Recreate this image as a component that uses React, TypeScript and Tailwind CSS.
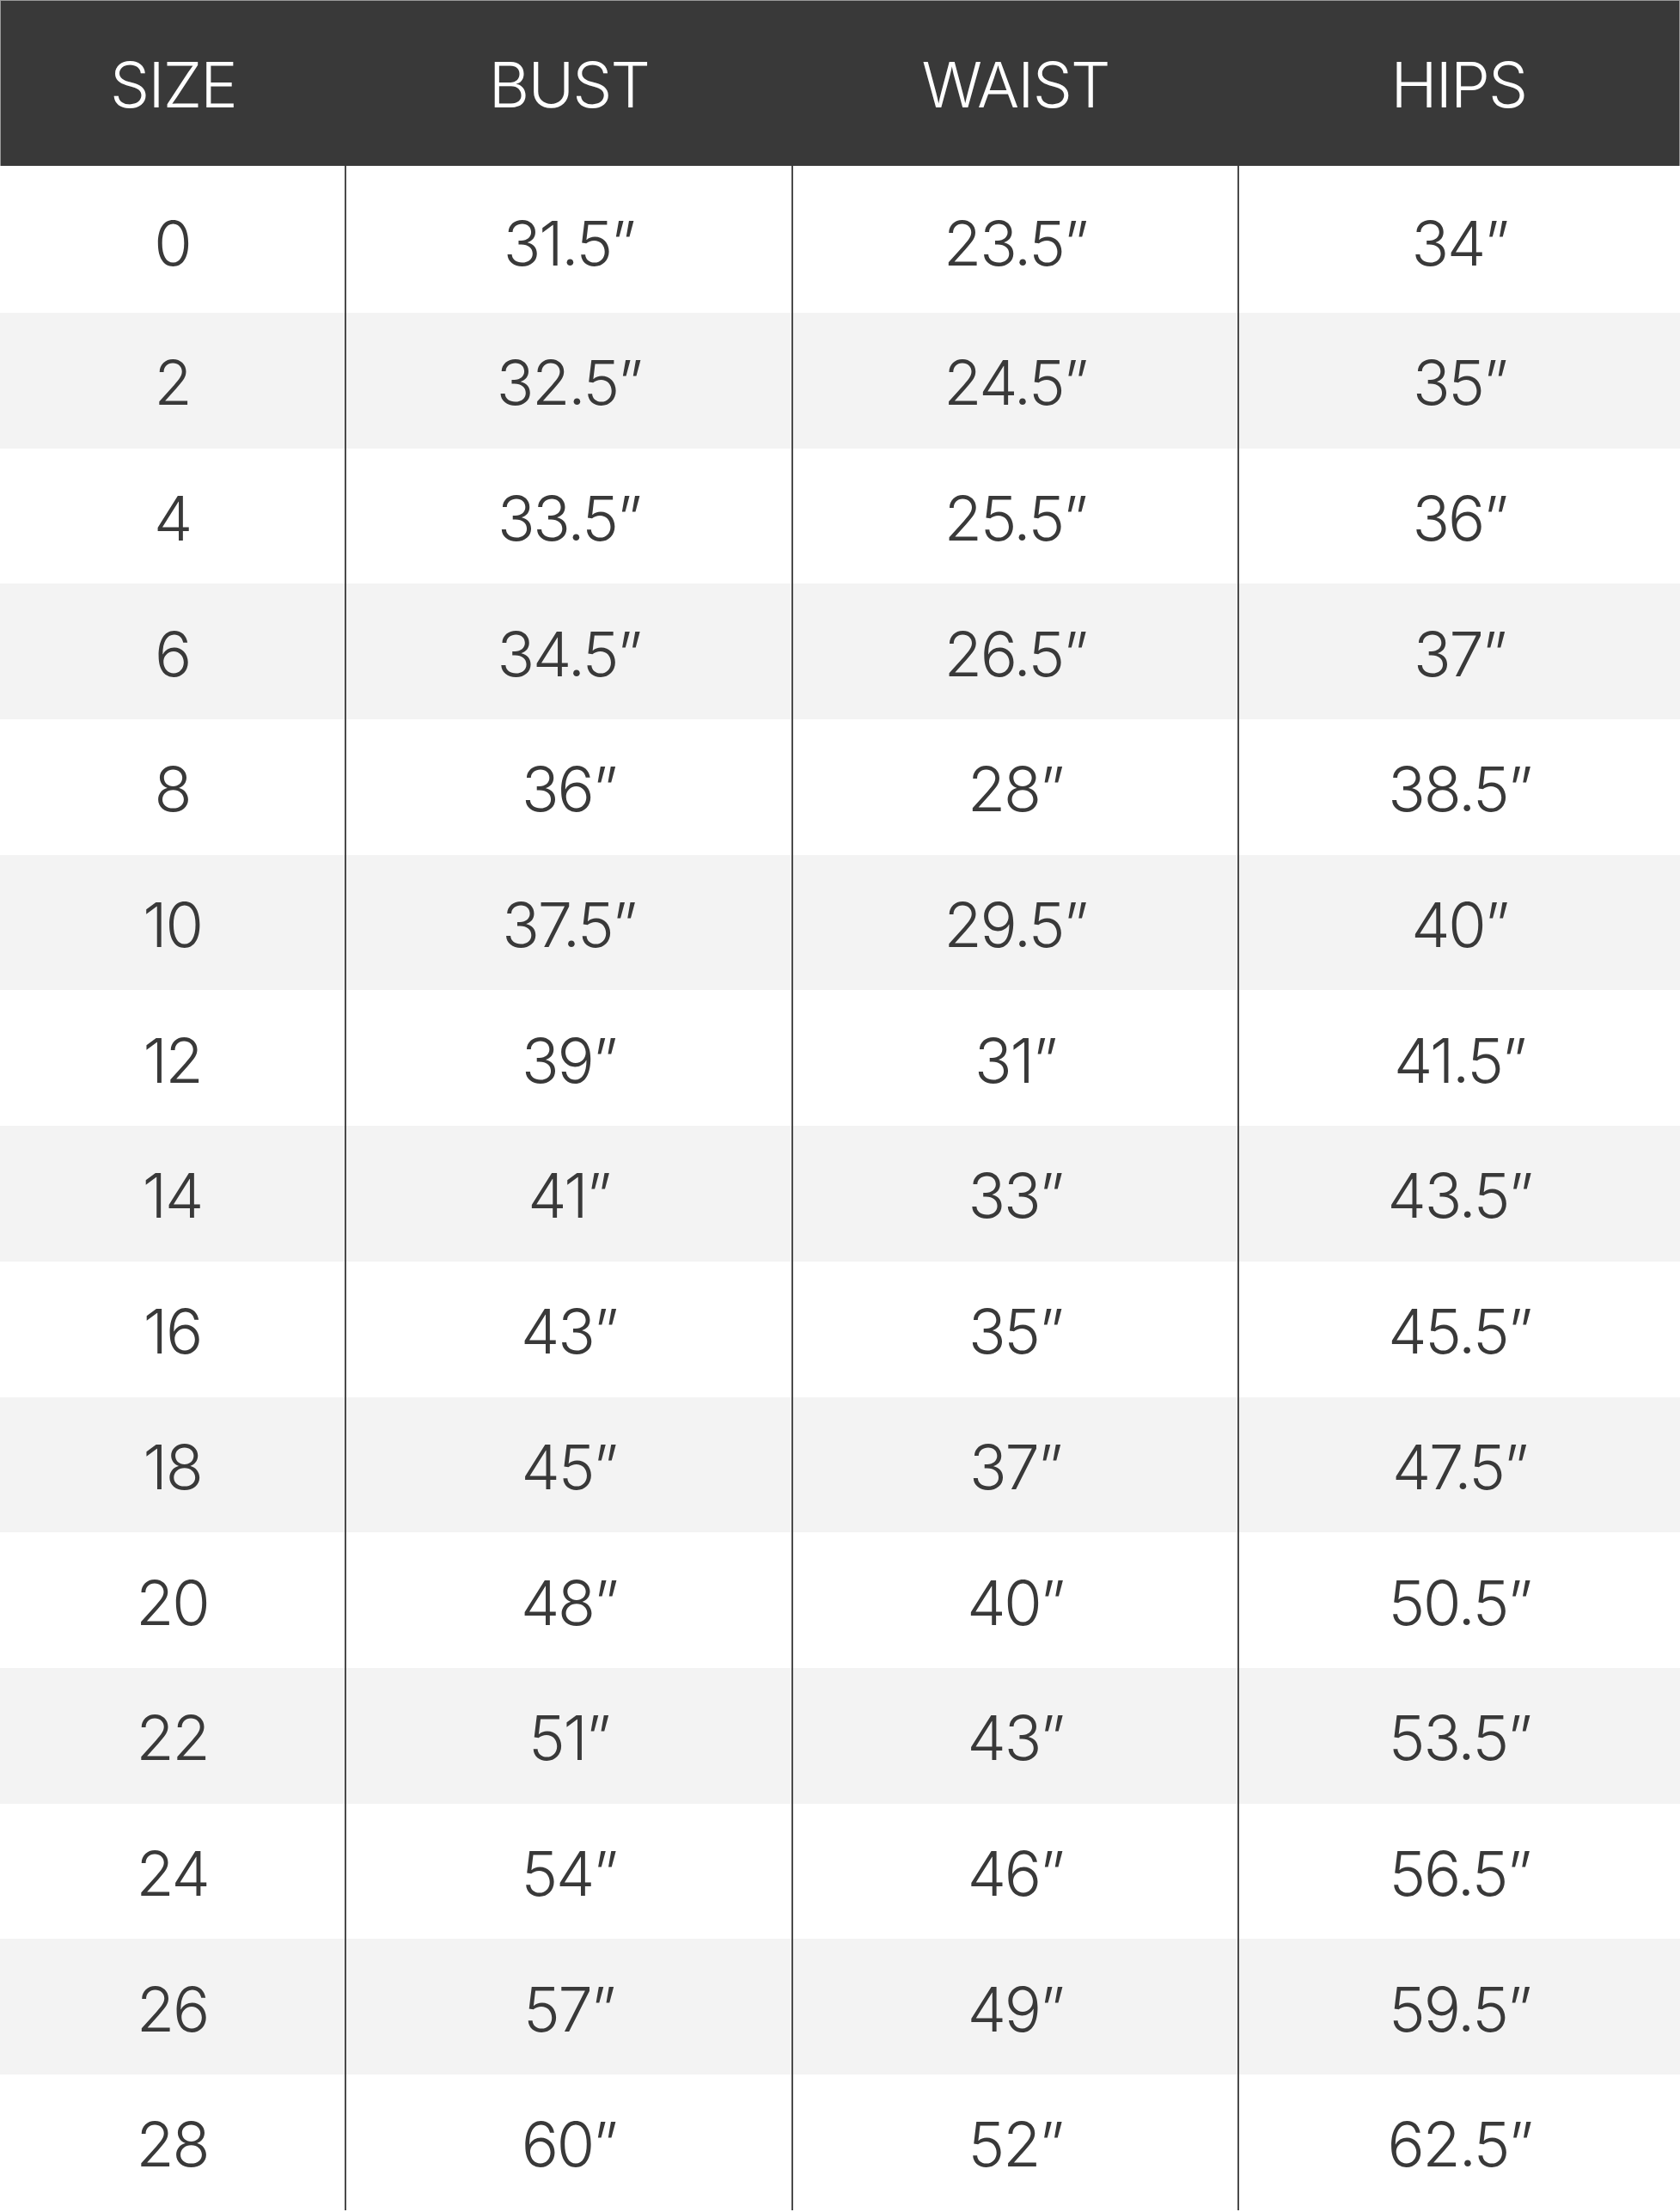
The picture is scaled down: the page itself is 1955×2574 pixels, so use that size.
const rows: [string, string, string, string][] = [
  ["0", "31.5”", "23.5”", "34”"],
  ["2", "32.5”", "24.5”", "35”"],
  ["4", "33.5”", "25.5”", "36”"],
  ["6", "34.5”", "26.5”", "37”"],
  ["8", "36”", "28”", "38.5”"],
  ["10", "37.5”", "29.5”", "40”"],
  ["12", "39”", "31”", "41.5”"],
  ["14", "41”", "33”", "43.5”"],
  ["16", "43”", "35”", "45.5”"],
  ["18", "45”", "37”", "47.5”"],
  ["20", "48”", "40”", "50.5”"],
  ["22", "51”", "43”", "53.5”"],
  ["24", "54”", "46”", "56.5”"],
  ["26", "57”", "49”", "59.5”"],
  ["28", "60”", "52”", "62.5”"],
];

const headers = ["SIZE", "BUST", "WAIST", "HIPS"];

export default function App() {
  return (
    <div className="w-[1955px] bg-white font-['Inter',sans-serif] font-light">
      {/* Header */}
      <div className="grid h-[193px] grid-cols-[401px_520px_519px_1fr] border-x border-t border-[#9a9a9a] bg-[#393939] text-white">
        {headers.map((h) => (
          <div key={h} className="flex items-center justify-center pt-[2px] text-[73px] leading-none tracking-[-0.025em]">
            {h}
          </div>
        ))}
      </div>

      {/* Body */}
      {rows.map((r, i) => (
        <div
          key={r[0]}
          className={
            "grid grid-cols-[401px_520px_519px_1fr] text-[#393939] " +
            (i === 0 ? "h-[171px] " : "h-[157.7px] ") +
            (i % 2 === 1 ? "bg-[#f3f3f3]" : "bg-white")
          }
        >
          {r.map((v, j) => (
            <div
              key={j}
              className={
                "flex items-center justify-center text-[72px] leading-none tracking-[-0.03em] " +
                (i === 0 ? "pt-[8px] " : "pt-[5px] ") +
                (j > 0 ? "border-l-2 border-[#4a4a4a]" : "")
              }
            >
              {v}
            </div>
          ))}
        </div>
      ))}
    </div>
  );
}
